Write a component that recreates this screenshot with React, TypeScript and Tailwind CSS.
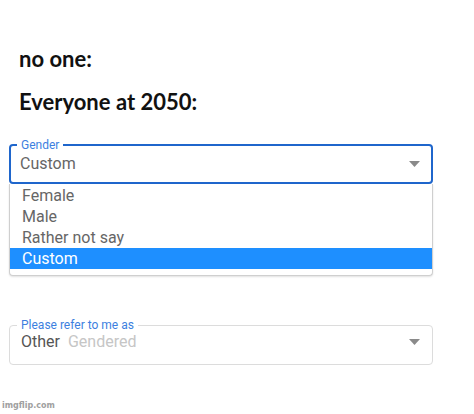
const options = ["Female", "Male", "Rather not say", "Custom"];

function Caret() {
  return (
    <svg width="11" height="6" viewBox="0 0 11 6" className="shrink-0">
      <polygon points="0,0 11,0 5.5,6" fill="#8a8a8a" />
    </svg>
  );
}

export default function App() {
  return (
    <div className="relative h-[414px] w-[474px] overflow-hidden bg-white font-['Roboto',sans-serif]">
      <div className="flex flex-col gap-[17px] pl-[19px] pt-[46px] font-['Lato','Open_Sans',sans-serif] text-[22px] font-bold leading-[26px] text-[#111]">
        <p>no one:</p>
        <p>Everyone at 2050:</p>
      </div>

      <div className="ml-[9px] mt-[23px] w-[424px]">
        {/* focused select */}
        <fieldset className="rounded-[4px] border-2 border-[#1f66cc] pl-[6px] pr-[11px] pb-[6px]">
          <legend className="px-[4px] text-[12px] leading-[14px] text-[#3d7fe0]">Gender</legend>
          <div className="flex h-[24px] items-center justify-between pl-[3px]">
            <span className="text-[16px] text-[#666]">Custom</span>
            <Caret />
          </div>
        </fieldset>

        {/* open option list */}
        <ul className="rounded-b-[4px] border border-t-0 border-[#cfcfcf] bg-white pb-[6px] pt-[1px] shadow-[0_1px_2px_rgba(0,0,0,0.12)]">
          {options.map((o) => (
            <li
              key={o}
              className={`pl-[12px] text-[16px] leading-[21px] ${
                o === "Custom" ? "bg-[#1e8fff] text-white" : "text-[#666]"
              }`}
            >
              {o}
            </li>
          ))}
        </ul>

        <fieldset className="mt-[42px] rounded-[4px] border border-[#dcdcdc] pl-[7px] pr-[12px] pb-[12px]">
          <legend className="px-[4px] text-[12px] leading-[14px] text-[#3d7fe0]">Please refer to me as</legend>
          <div className="flex h-[20px] items-center justify-between pl-[4px]">
            <span className="text-[16px]">
              <span className="text-[#555]">Other</span>
              <span className="ml-[8px] text-[#c6c6c6]">Gendered</span>
            </span>
            <Caret />
          </div>
        </fieldset>
      </div>

      <span className="absolute bottom-[4px] left-[2px] font-['DejaVu_Sans',sans-serif] text-[8px] font-bold leading-[9px] text-[#a0a0a0]">
        imgflip.com
      </span>
    </div>
  );
}
